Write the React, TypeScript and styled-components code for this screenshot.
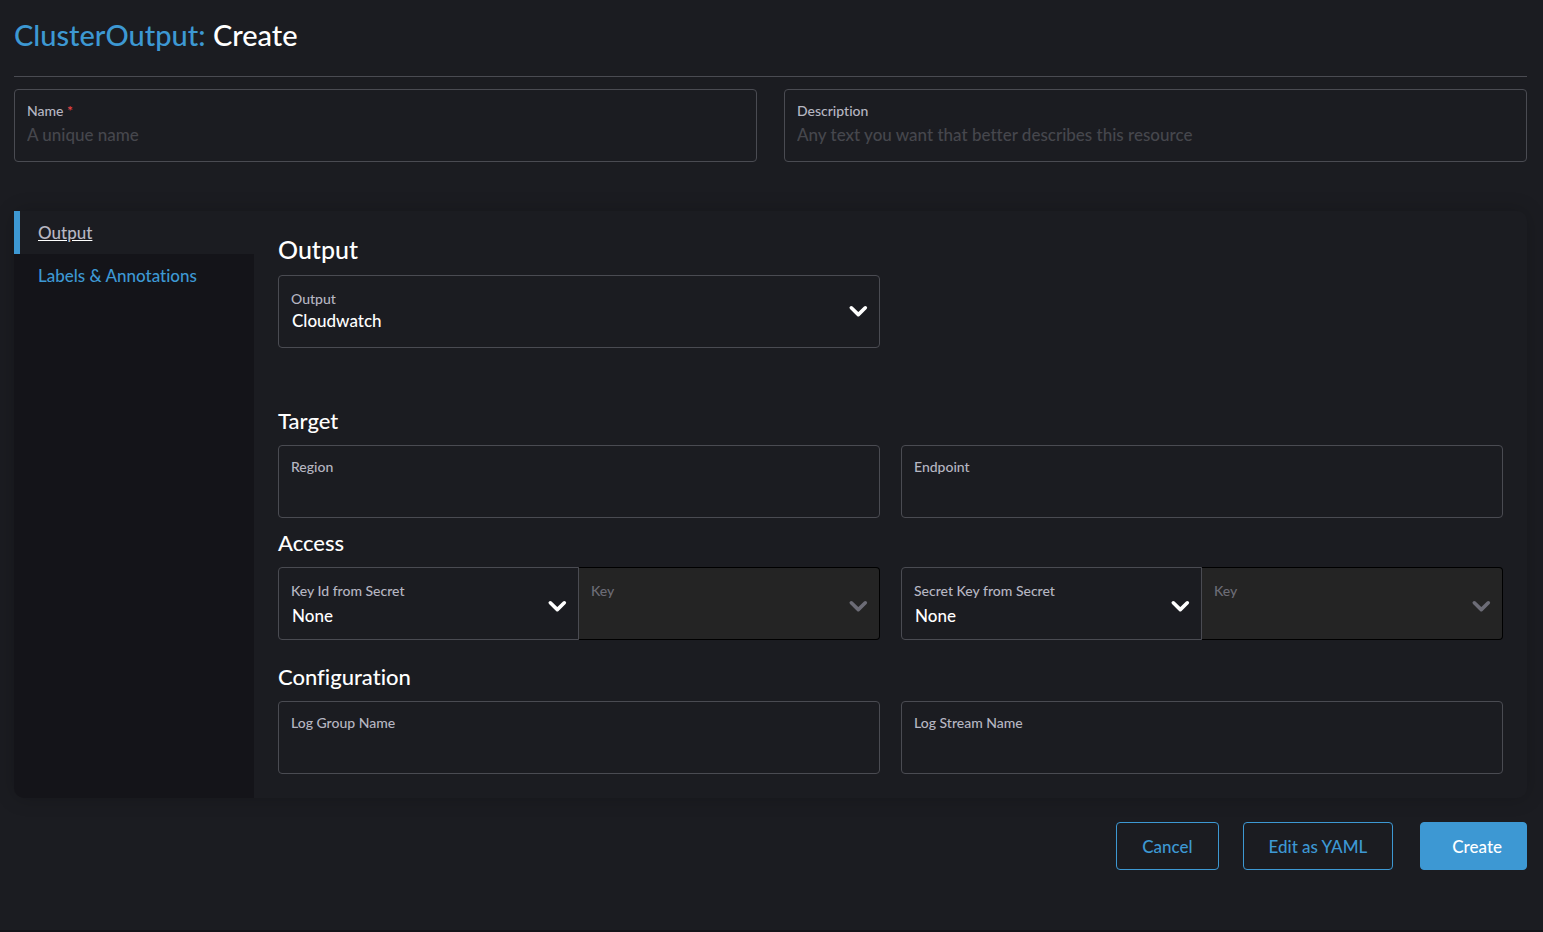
import React, { useId } from 'react';
import styled, { createGlobalStyle } from 'styled-components';

const color = {
  body: '#1b1c21',
  nav: '#141419',
  border: '#4a4b52',
  text: '#ffffff',
  label: '#b6b6c2',
  muted: '#6c6c76',
  placeholder: '#46474d',
  link: '#3d98d3',
  disabledBg: '#242424',
  error: '#f64747',
};

const GlobalStyle = createGlobalStyle`
  *, *::before, *::after { box-sizing: border-box; }
  body {
    margin: 0;
    background: ${color.body};
    color: ${color.text};
    font-family: Lato, "Liberation Sans", sans-serif;
    font-size: 17px;
    font-weight: 500;
    font-variant-ligatures: none;
  }
`;

const Page = styled.main`
  min-height: 100vh;
  padding: 16px 16px 24px 14px;
  border-bottom: 2px solid ${color.nav};
`;

const PageHeader = styled.header`
  padding-bottom: 22px;
  border-bottom: 1px solid ${color.border};
`;

const Title = styled.h1`
  margin: 0;
  font-size: 29px;
  line-height: 38px;
  font-weight: 500;
`;

const TitleLink = styled.a`
  color: ${color.link};
  text-decoration: none;
`;

const NameRow = styled.div`
  display: grid;
  grid-template-columns: 1fr 1fr;
  gap: 27px;
  margin: 12px 0 49px;
`;

const Panel = styled.section`
  display: grid;
  grid-template-columns: 240px 1fr;
  border-radius: 10px;
  box-shadow: 0 0 20px rgba(0, 0, 0, 0.2);
`;

const SideNav = styled.nav`
  display: flex;
  flex-direction: column;
  background: ${color.nav};
  border-radius: 0 0 0 10px;
`;

const Tab = styled.a<{ $active?: boolean }>`
  padding-left: ${(p) => (p.$active ? 18 : 24)}px;
  border-left: ${(p) => (p.$active ? `6px solid ${color.link}` : '0')};
  background: ${(p) => (p.$active ? color.body : 'transparent')};
  color: ${(p) => (p.$active ? color.label : color.link)};
  line-height: 43px;
  text-decoration: ${(p) => (p.$active ? `underline ${color.text}` : 'none')};
`;

const Content = styled.div`
  padding: 24px;
`;

const PanelTitle = styled.h2`
  margin: 0 0 12px;
  font-size: 25px;
  line-height: 28px;
  font-weight: 500;
`;

const SectionTitle = styled.h3<{ $before: number }>`
  margin: ${(p) => p.$before}px 0 11px;
  font-size: 22px;
  line-height: 26px;
  font-weight: 500;
`;

const Row = styled.div`
  display: grid;
  grid-template-columns: 1fr 1fr;
  gap: 21px;
`;

const SecretPair = styled.div`
  display: grid;
  grid-template-columns: 1fr 1fr;
`;

type Join = 'left' | 'right';

const Box = styled.div<{ $select?: boolean; $join?: Join; $disabled?: boolean }>`
  position: relative;
  display: flex;
  flex-direction: column;
  height: 73px;
  padding: ${(p) => (p.$select ? 14 : 12)}px 12px 0;
  border: 1px solid ${(p) => (p.$disabled ? '#000000' : color.border)};
  border-left-width: ${(p) => (p.$join === 'right' ? 0 : 1)}px;
  border-radius: ${(p) =>
    p.$join === 'left' ? '4px 0 0 4px' : p.$join === 'right' ? '0 4px 4px 0' : '4px'};
  background: ${(p) => (p.$disabled ? color.disabledBg : 'transparent')};
`;

const Label = styled.label<{ $disabled?: boolean }>`
  font-size: 14px;
  line-height: 18px;
  color: ${(p) => (p.$disabled ? color.muted : color.label)};
`;

const Required = styled.span`
  color: ${color.error};
`;

const Input = styled.input`
  width: 100%;
  height: 24px;
  margin-top: 2px;
  padding: 0;
  border: 0;
  outline: 0;
  background: transparent;
  color: ${color.text};
  font: inherit;

  &::placeholder {
    color: ${color.placeholder};
    opacity: 1;
  }
`;

const Select = styled.select<{ $compact?: boolean }>`
  appearance: none;
  width: 100%;
  height: 24px;
  margin-top: ${(p) => (p.$compact ? 0 : 3)}px;
  padding: 0 32px 0 1px;
  border: 0;
  outline: 0;
  background: transparent;
  color: ${color.text};
  font: inherit;
  opacity: 1;
`;

const Chevron = styled.svg<{ $disabled?: boolean; $compact?: boolean }>`
  position: absolute;
  right: 11px;
  top: ${(p) => (p.$compact ? 29 : 32)}px;
  width: 20px;
  height: 13px;
  fill: none;
  stroke: ${(p) => (p.$disabled ? color.muted : color.text)};
  stroke-width: 3.6;
  stroke-linecap: round;
  stroke-linejoin: round;
  pointer-events: none;
`;

const Footer = styled.footer`
  display: flex;
  justify-content: flex-end;
  gap: 24px;
  margin-top: 24px;
`;

const Button = styled.button`
  height: 48px;
  padding: 0 25px;
  border: 1px solid ${color.link};
  border-radius: 4px;
  background: transparent;
  color: ${color.link};
  font: inherit;
  cursor: pointer;
`;

const PrimaryButton = styled(Button)`
  margin-left: 3px;
  padding-left: 31px;
  padding-right: 24px;
  background: ${color.link};
  color: ${color.text};
`;

interface TextFieldProps {
  label: string;
  placeholder?: string;
  required?: boolean;
}

function TextField({ label, placeholder, required }: TextFieldProps) {
  const id = useId();
  return (
    <Box>
      <Label htmlFor={id}>
        {label}
        {required && <Required> *</Required>}
      </Label>
      <Input id={id} type="text" placeholder={placeholder} required={required} />
    </Box>
  );
}

interface SelectFieldProps {
  label: string;
  value?: string;
  disabled?: boolean;
  compact?: boolean;
  join?: Join;
}

function SelectField({ label, value, disabled, compact, join }: SelectFieldProps) {
  const id = useId();
  return (
    <Box $select $join={join} $disabled={disabled}>
      <Label htmlFor={id} $disabled={disabled}>
        {label}
      </Label>
      <Select id={id} disabled={disabled} $compact={compact}>
        {value && <option>{value}</option>}
      </Select>
      <Chevron viewBox="0 0 20 13" $disabled={disabled} $compact={compact} aria-hidden="true">
        <path d="M3.3 2.8 L10.3 9.6 L17.3 2.8" />
      </Chevron>
    </Box>
  );
}

export default function App() {
  return (
    <>
      <GlobalStyle />
      <Page>
        <PageHeader>
          <Title>
            <TitleLink href="#">ClusterOutput:</TitleLink> Create
          </Title>
        </PageHeader>
        <NameRow>
          <TextField label="Name" placeholder="A unique name" required />
          <TextField
            label="Description"
            placeholder="Any text you want that better describes this resource"
          />
        </NameRow>
        <Panel>
          <SideNav>
            <Tab href="#output" $active>
              Output
            </Tab>
            <Tab href="#labels">Labels &amp; Annotations</Tab>
          </SideNav>
          <Content>
            <PanelTitle>Output</PanelTitle>
            <Row>
              <SelectField label="Output" value="Cloudwatch" compact />
            </Row>
            <SectionTitle $before={60}>Target</SectionTitle>
            <Row>
              <TextField label="Region" />
              <TextField label="Endpoint" />
            </Row>
            <SectionTitle $before={12}>Access</SectionTitle>
            <Row>
              <SecretPair>
                <SelectField label="Key Id from Secret" value="None" join="left" />
                <SelectField label="Key" disabled join="right" />
              </SecretPair>
              <SecretPair>
                <SelectField label="Secret Key from Secret" value="None" join="left" />
                <SelectField label="Key" disabled join="right" />
              </SecretPair>
            </Row>
            <SectionTitle $before={24}>Configuration</SectionTitle>
            <Row>
              <TextField label="Log Group Name" />
              <TextField label="Log Stream Name" />
            </Row>
          </Content>
        </Panel>
        <Footer>
          <Button type="button">Cancel</Button>
          <Button type="button">Edit as YAML</Button>
          <PrimaryButton type="submit">Create</PrimaryButton>
        </Footer>
      </Page>
    </>
  );
}
